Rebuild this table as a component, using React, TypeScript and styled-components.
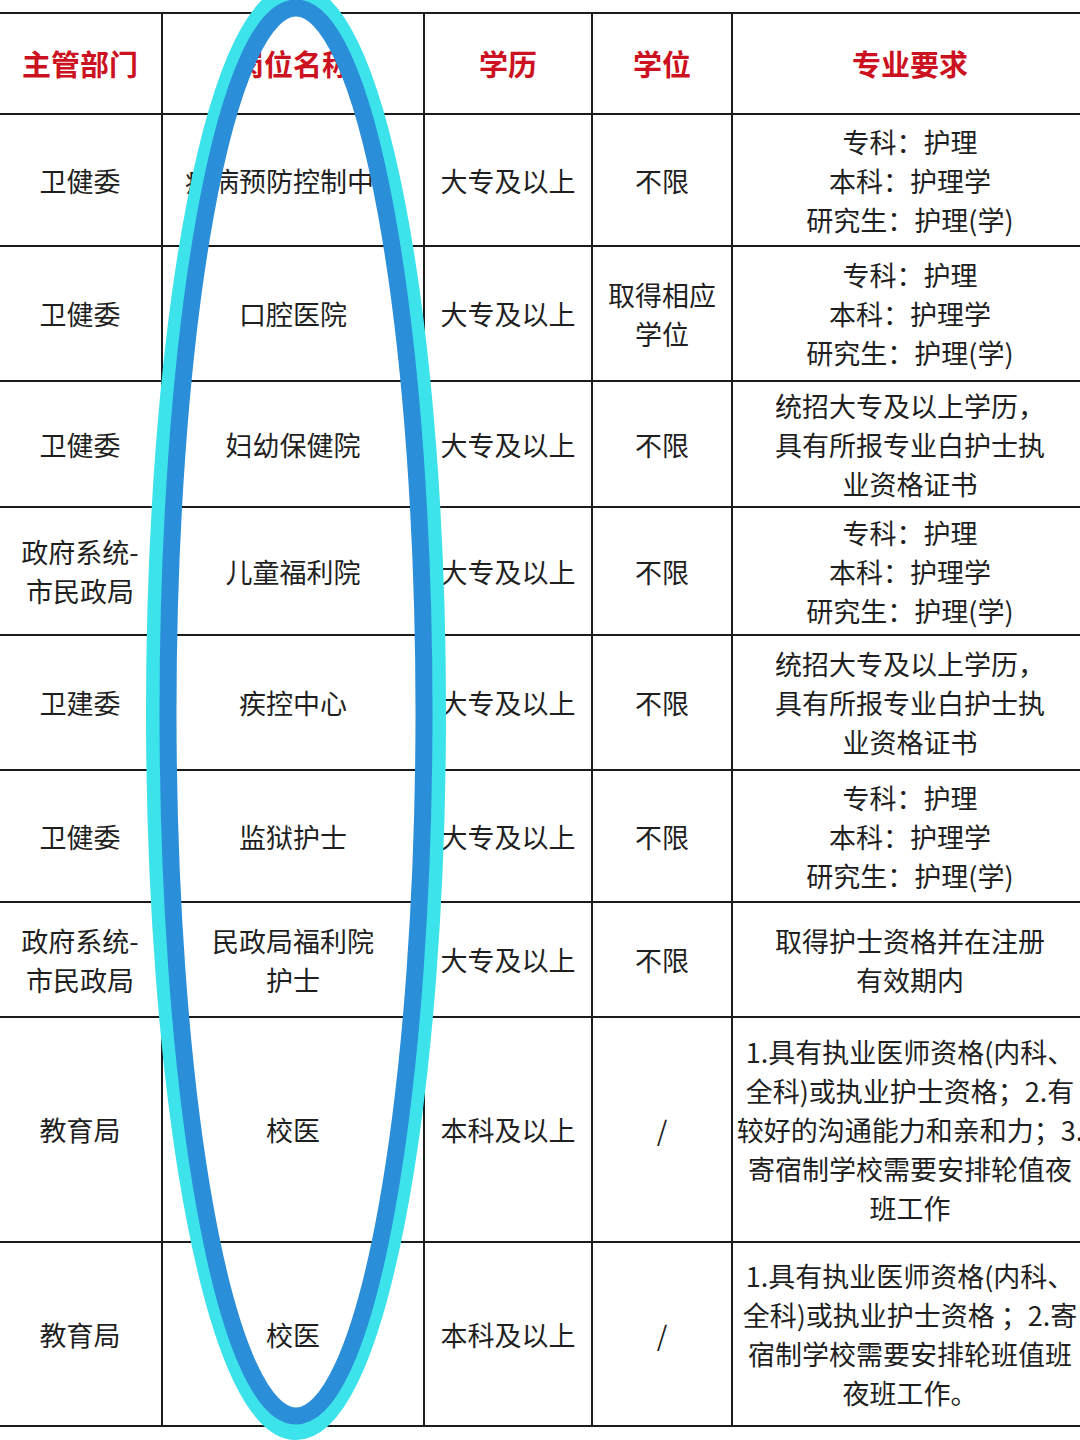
import React from "react";
import styled, { createGlobalStyle } from "styled-components";

const GlobalStyle = createGlobalStyle`
  html, body {
    margin: 0;
    padding: 0;
    background: #ffffff;
  }
  body {
    font-family: "Noto Sans CJK SC", "Noto Sans", sans-serif;
  }
`;

const Page = styled.div`
  position: relative;
  width: 1080px;
  height: 1440px;
  overflow: hidden;
  padding-top: 12px;
  box-sizing: border-box;
`;

const Table = styled.table`
  margin-left: -3px;
  width: 1090px;
  table-layout: fixed;
  border-collapse: collapse;
  color: #1f1f1f;
  font-size: 27px;
  line-height: 39px;
`;

const Col = styled.col<{ $w: number }>`
  width: ${(p) => p.$w}px;
`;

const Row = styled.tr<{ $h: number }>`
  height: ${(p) => p.$h}px;
`;

const HeadCell = styled.th`
  border: 2px solid #1c1c1c;
  color: #cc1120;
  font-size: 29px;
  font-weight: 700;
  text-align: center;
  vertical-align: middle;
  padding: 0;
  white-space: nowrap;
`;

const Cell = styled.td`
  border: 2px solid #1c1c1c;
  text-align: center;
  vertical-align: middle;
  padding: 0;
  white-space: nowrap;
`;

const Ring = styled.svg`
  position: absolute;
  left: 0;
  top: 0;
  pointer-events: none;
`;

type RowData = {
  h: number;
  dept: string[];
  post: string[];
  edu: string;
  degree: string[];
  req: string[];
};

const nurse = ["专科：护理", "本科：护理学", "研究生：护理(学)"];
const license = ["统招大专及以上学历，", "具有所报专业白护士执", "业资格证书"];

const rows: RowData[] = [
  { h: 132, dept: ["卫健委"], post: ["疾病预防控制中心"], edu: "大专及以上", degree: ["不限"], req: nurse },
  { h: 135, dept: ["卫健委"], post: ["口腔医院"], edu: "大专及以上", degree: ["取得相应", "学位"], req: nurse },
  { h: 126, dept: ["卫健委"], post: ["妇幼保健院"], edu: "大专及以上", degree: ["不限"], req: license },
  { h: 128, dept: ["政府系统-", "市民政局"], post: ["儿童福利院"], edu: "大专及以上", degree: ["不限"], req: nurse },
  { h: 135, dept: ["卫建委"], post: ["疾控中心"], edu: "大专及以上", degree: ["不限"], req: license },
  { h: 132, dept: ["卫健委"], post: ["监狱护士"], edu: "大专及以上", degree: ["不限"], req: nurse },
  {
    h: 115,
    dept: ["政府系统-", "市民政局"],
    post: ["民政局福利院", "护士"],
    edu: "大专及以上",
    degree: ["不限"],
    req: ["取得护士资格并在注册", "有效期内"],
  },
  {
    h: 225,
    dept: ["教育局"],
    post: ["校医"],
    edu: "本科及以上",
    degree: ["/"],
    req: [
      "1.具有执业医师资格(内科、",
      "全科)或执业护士资格；2.有",
      "较好的沟通能力和亲和力；3.",
      "寄宿制学校需要安排轮值夜",
      "班工作",
    ],
  },
  {
    h: 184,
    dept: ["教育局"],
    post: ["校医"],
    edu: "本科及以上",
    degree: ["/"],
    req: [
      "1.具有执业医师资格(内科、",
      "全科)或执业护士资格 ；2.寄",
      "宿制学校需要安排轮班值班",
      "夜班工作。",
    ],
  },
];

const Lines = ({ lines }: { lines: string[] }) => (
  <>
    {lines.map((l, i) => (
      <React.Fragment key={i}>
        {i > 0 && <br />}
        {l}
      </React.Fragment>
    ))}
  </>
);

export default function App() {
  return (
    <Page>
      <GlobalStyle />
      <Table>
        <colgroup>
          <Col $w={164} />
          <Col $w={262} />
          <Col $w={168} />
          <Col $w={140} />
          <Col $w={356} />
        </colgroup>
        <thead>
          <Row $h={101}>
            <HeadCell>主管部门</HeadCell>
            <HeadCell>岗位名称</HeadCell>
            <HeadCell>学历</HeadCell>
            <HeadCell>学位</HeadCell>
            <HeadCell>专业要求</HeadCell>
          </Row>
        </thead>
        <tbody>
          {rows.map((r, i) => (
            <Row key={i} $h={r.h}>
              <Cell>
                <Lines lines={r.dept} />
              </Cell>
              <Cell>
                <Lines lines={r.post} />
              </Cell>
              <Cell>{r.edu}</Cell>
              <Cell>
                <Lines lines={r.degree} />
              </Cell>
              <Cell>
                <Lines lines={r.req} />
              </Cell>
            </Row>
          ))}
        </tbody>
      </Table>
      <Ring width={1080} height={1440} viewBox="0 0 1080 1440">
        <ellipse cx={296} cy={712} rx={138} ry={716} fill="none" stroke="#3de3eb" strokeWidth={24} />
        <ellipse cx={296} cy={712} rx={128} ry={704} fill="none" stroke="#2b8ed8" strokeWidth={17} />
      </Ring>
    </Page>
  );
}
